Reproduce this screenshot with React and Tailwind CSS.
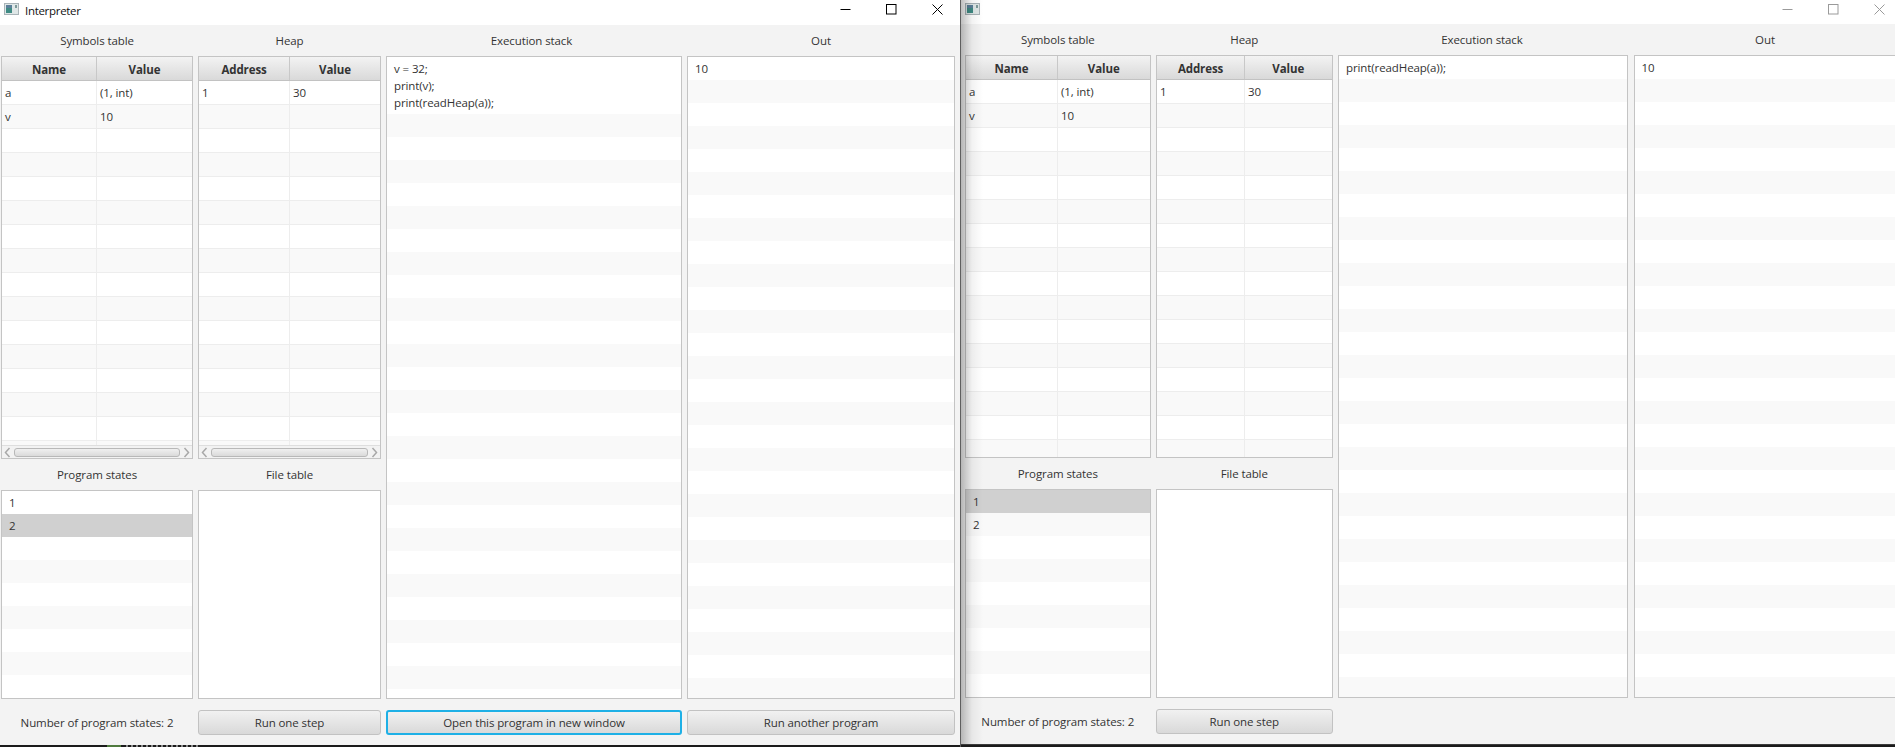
const FONT = "font-['Open_Sans','Noto_Sans',sans-serif]";

function Chevron({ dir }) {
  return (
    <svg width="7" height="11" viewBox="0 0 7 11" className="shrink-0">
      <path d={dir === "left" ? "M5.5 1 L1.5 5.5 L5.5 10" : "M1.5 1 L5.5 5.5 L1.5 10"} fill="none" stroke="#a8a8a8" strokeWidth="1.5" />
    </svg>
  );
}

function Scrollbar() {
  return (
    <div className="h-[13px] shrink-0 flex items-center gap-[3px] px-[2px] bg-[#f2f2f2] border-t border-[#dedede]">
      <Chevron dir="left" />
      <div className="flex-1 h-[9px] rounded-[3px] border border-[#b8b8b8] bg-linear-to-b from-[#f0f0f0] to-[#dadada]" />
      <Chevron dir="right" />
    </div>
  );
}

function TableView({ columns, rows, firstCol, scrollbar }) {
  const blank = Array.from({ length: 18 - rows.length }, () => ["", ""]);
  const all = [...rows, ...blank];
  return (
    <div className="h-full flex flex-col border border-[#c4c4c4] bg-white overflow-hidden">
      <div className={`flex h-[24px] shrink-0 border-b border-[#c2c2c2]`}>
        {columns.map((c, i) => (
          <div
            key={c}
            style={i === 0 ? { width: firstCol } : undefined}
            className={`${i === 0 ? "shrink-0 border-r border-[#c8c8c8]" : "flex-1"} flex items-center justify-center pt-[2px] font-bold text-[#333] bg-linear-to-b from-[#f3f3f3] to-[#d9d9d9]`}
          >
            {c}
          </div>
        ))}
      </div>
      <div className="flex-1 min-h-0 overflow-hidden">
        {all.map((r, i) => (
          <div key={i} className={`flex h-[24px] border-b border-[#ededed] ${i % 2 ? "bg-[#f9f9f9]" : "bg-white"}`}>
            <div style={{ width: firstCol }} className="shrink-0 pl-[3px] border-r border-[#ededed] leading-[24px] text-[#333]">{r[0]}</div>
            <div className="flex-1 pl-[3px] leading-[24px] text-[#333]">{r[1]}</div>
          </div>
        ))}
      </div>
      {scrollbar && <Scrollbar />}
    </div>
  );
}

function ListView({ items = [], selected = -1, count = 28, firstTall = false, blank = false }) {
  const cells = Array.from({ length: count }, (_, i) => i);
  return (
    <div className="h-full border border-[#c4c4c4] bg-white overflow-hidden">
      {!blank &&
        cells.map((i) => (
          <div
            key={i}
            className={`px-[7px] text-[#333] ${firstTall && i === 0 ? "py-[3px] leading-[17px]" : "h-[23px] leading-[23px]"} ${
              i === selected ? "bg-[#d0d0d0]" : i % 2 ? "bg-[#f9f9f9]" : "bg-white"
            }`}
          >
            {Array.isArray(items[i]) ? items[i].map((l) => <div key={l}>{l}</div>) : items[i] ?? ""}
          </div>
        ))}
    </div>
  );
}

function Label({ className, children }) {
  return <div className={`flex items-center justify-center text-[#333] ${className}`}>{children}</div>;
}

function Btn({ className = "", focused, children }) {
  return (
    <button
      className={`rounded-[3px] tracking-[-0.1px] text-[#333] bg-linear-to-b from-[#f1f1f1] to-[#d9d9d9] ${
        focused ? "border-2 border-[#1eb0e6]" : "border border-[#c2c2c2]"
      } ${className}`}
    >
      {children}
    </button>
  );
}

function TitleBar({ title, height, children }) {
  return (
    <div className={`${height} shrink-0 bg-white flex items-start`}>
      <svg width="16" height="12" viewBox="0 0 16 12" className="ml-[4px] mt-[3px] shrink-0">
        <rect x="0" y="0" width="15" height="12" fill="#a9b4b8" />
        <rect x="1" y="1" width="13" height="10" fill="#dfe7e7" />
        <rect x="2" y="2" width="6" height="8" fill="#3f8b84" />
        <rect x="2" y="2" width="6" height="3" fill="#5b7f99" />
        <rect x="11" y="2" width="2" height="3" fill="#7d9a9a" />
      </svg>
      {title && <span className="ml-[5px] text-[11.5px] tracking-[-0.3px] leading-[22px] text-[#111]">{title}</span>}
      <div className="ml-auto flex shrink-0">{children}</div>
    </div>
  );
}

function WinControls({ stroke }) {
  return (
    <>
      <div className="w-[45.5px] h-[18px] flex justify-center">
        <svg width="11" height="18" viewBox="0 0 11 18"><path d="M0.5 9.5 H10.5" stroke={stroke} /></svg>
      </div>
      <div className="w-[45.5px] h-[18px] flex justify-center">
        <svg width="11" height="18" viewBox="0 0 11 18"><rect x="0.5" y="4.5" width="9.5" height="9.5" fill="none" stroke={stroke} /></svg>
      </div>
      <div className="w-[46px] h-[18px] flex justify-center">
        <svg width="11" height="18" viewBox="0 0 11 18"><path d="M0.5 4.5 L10.5 14.5 M10.5 4.5 L0.5 14.5" fill="none" stroke={stroke} /></svg>
      </div>
    </>
  );
}

export default function App() {
  return (
    <div className={`${FONT} text-[11.5px] tracking-[-0.1px] w-[1895px] h-[747px] overflow-hidden flex bg-[#1b1b1b]`}>
      {/* Main window */}
      <div className="w-[960px] shrink-0 flex flex-col bg-[#f3f3f3]">
        <TitleBar title="Interpreter" height="h-[25px]">
          <WinControls stroke="#000" />
        </TitleBar>
        <div className="flex-1 pl-[1px] grid grid-cols-[192px_183px_296px_268px] grid-rows-[31px_403px_31px_209px_11px_25px] gap-x-[5px]">
          <Label className="col-start-1 row-start-1">Symbols table</Label>
          <Label className="col-start-2 row-start-1">Heap</Label>
          <Label className="col-start-3 row-start-1 pr-[5px]">Execution stack</Label>
          <Label className="col-start-4 row-start-1">Out</Label>
          <div className="col-start-1 row-start-2">
            <TableView columns={["Name", "Value"]} firstCol={95} scrollbar rows={[["a", "(1, int)"], ["v", "10"]]} />
          </div>
          <div className="col-start-2 row-start-2">
            <TableView columns={["Address", "Value"]} firstCol={91} scrollbar rows={[["1", "30"]]} />
          </div>
          <div className="col-start-3 row-start-2 row-span-3">
            <ListView firstTall items={[["v = 32;", "print(v);", "print(readHeap(a));"]]} />
          </div>
          <div className="col-start-4 row-start-2 row-span-3">
            <ListView items={["10"]} />
          </div>
          <Label className="col-start-1 row-start-3">Program states</Label>
          <Label className="col-start-2 row-start-3">File table</Label>
          <div className="col-start-1 row-start-4">
            <ListView items={["1", "2"]} selected={1} count={10} />
          </div>
          <div className="col-start-2 row-start-4">
            <ListView blank />
          </div>
          <Label className="col-start-1 row-start-6">Number of program states: 2</Label>
          <Btn className="col-start-2 row-start-6">Run one step</Btn>
          <Btn focused className="col-start-3 row-start-6">Open this program in new window</Btn>
          <Btn className="col-start-4 row-start-6">Run another program</Btn>
        </div>
        <div className="h-[2px] shrink-0 bg-[#1b1b1b] flex">
          <div className="ml-[107px] w-[14px] bg-[#4f7a3e]" />
          <div className="ml-[5px] w-[72px] bg-[repeating-linear-gradient(90deg,#8a8a8a_0px,#8a8a8a_2px,#1b1b1b_2px,#1b1b1b_5px)]" />
        </div>
      </div>
      <div className="w-[1px] shrink-0 bg-[#5f5f5f]" />
      {/* Second window */}
      <div className="relative w-[941px] shrink-0 flex flex-col bg-[#f3f3f3]">
        <TitleBar height="h-[24px]">
          <WinControls stroke="#9a9a9a" />
        </TitleBar>
        <div className="flex-1 pl-[4px] grid grid-cols-[185.5px_176.5px_290px_263px] grid-rows-[31px_403px_31px_209px_11px_25px] gap-x-[5.5px]">
          <Label className="col-start-1 row-start-1">Symbols table</Label>
          <Label className="col-start-2 row-start-1">Heap</Label>
          <Label className="col-start-3 row-start-1 pr-[2px]">Execution stack</Label>
          <Label className="col-start-4 row-start-1">Out</Label>
          <div className="col-start-1 row-start-2">
            <TableView columns={["Name", "Value"]} firstCol={92} rows={[["a", "(1, int)"], ["v", "10"]]} />
          </div>
          <div className="col-start-2 row-start-2">
            <TableView columns={["Address", "Value"]} firstCol={88} rows={[["1", "30"]]} />
          </div>
          <div className="col-start-3 row-start-2 row-span-3">
            <ListView items={["print(readHeap(a));"]} />
          </div>
          <div className="col-start-4 row-start-2 row-span-3">
            <ListView items={["10"]} />
          </div>
          <Label className="col-start-1 row-start-3">Program states</Label>
          <Label className="col-start-2 row-start-3">File table</Label>
          <div className="col-start-1 row-start-4">
            <ListView items={["1", "2"]} selected={0} count={10} />
          </div>
          <div className="col-start-2 row-start-4">
            <ListView blank />
          </div>
          <Label className="col-start-1 row-start-6">Number of program states: 2</Label>
          <Btn className="col-start-2 row-start-6">Run one step</Btn>
        </div>
        <div className="h-[3px] shrink-0 bg-[#1b1b1b] border-t border-[#3c3c3c]" />
        {/* Drop shadow cast by the window on top */}
        <div className="absolute left-0 top-0 bottom-[3px] w-[22px] pointer-events-none bg-linear-to-r from-black/25 via-black/5 to-transparent" />
      </div>
    </div>
  );
}
